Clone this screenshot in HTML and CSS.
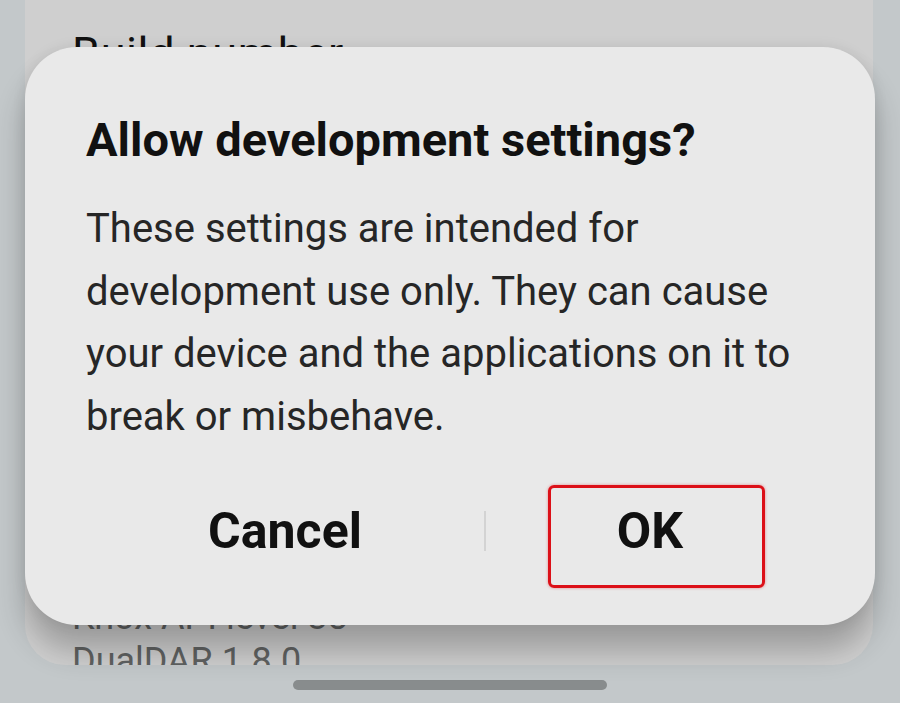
FILE: index.html
```html
<!DOCTYPE html>
<html lang="en">
<head>
<meta charset="UTF-8" />
<meta name="viewport" content="width=device-width, initial-scale=1" />
<title>Allow development settings?</title>
<link rel="stylesheet" href="styles.css">
</head>
<body>
  <div class="screen">
    <div class="card">
      <div class="row first">Build number</div>
      <div class="row-spacer"></div>
      <div class="row dim">Knox API level 38</div>
      <div class="row dim">DualDAR 1.8.0</div>
    </div>
    <div class="home-bar"></div>

    <div class="dialog">
      <h1 class="title">Allow development settings?</h1>
      <p class="message">These settings are intended for development use only. They can cause your device and the applications on it to break or misbehave.</p>
      <div class="actions">
        <button class="action cancel">Cancel</button>
        <span class="divider"></span>
        <button class="action ok">OK</button>
      </div>
    </div>
  </div>
</body>
</html>
```

FILE: styles.css
```css
html, body {
  margin: 0;
  height: 100%;
}
body {
  background: #c3c8ca;
  font-family: Roboto, "Noto Sans", sans-serif;
  overflow: hidden;
}
.screen {
  position: relative;
  height: 703px;
  padding: 0 27px 0 25px;
}
.card {
  height: 665px;
  background: #cfcfcf;
  border-radius: 0 0 40px 40px;
  padding-left: 47px;
  box-sizing: border-box;
  display: flex;
  flex-direction: column;
  overflow: hidden;
}
.row {
  font-size: 36px;
  line-height: 1;
  color: #111;
  white-space: nowrap;
}
.row.first {
  font-size: 45px;
  letter-spacing: 0.6px;
  margin-top: 31px;
}
.row-spacer {
  flex: 1;
}
.row.dim {
  color: #606262;
  margin-bottom: 8px;
}
.row.dim:last-child {
  margin-bottom: -14px;
}
.home-bar {
  width: 314px;
  height: 10px;
  margin: 15px auto 0;
  background: #888c8d;
  border-radius: 5px;
  position: relative;
  left: 1px;
}

/* dialog lies over the settings card */
.dialog {
  position: absolute;
  left: 25px;
  top: 47px;
  width: 850px;
  height: 578px;
  box-sizing: border-box;
  padding: 0 61px;
  background: #e9e9e9;
  border-radius: 52px;
  box-shadow: 0 0 14px rgba(0,0,0,0.08), 0 26px 30px rgba(0,0,0,0.24);
}
.title {
  margin: 0;
  padding-top: 67px;
  font-size: 47px;
  font-weight: 700;
  line-height: 52px;
  color: #111;
}
.message {
  margin: 32px 0 0;
  font-size: 40px;
  line-height: 62.5px;
  color: #262626;
}
.actions {
  position: relative;
  display: flex;
  align-items: center;
  margin-top: 33px;
  height: 100px;
}
.action {
  background: none;
  border: none;
  padding: 0;
  font-family: inherit;
  font-size: 50px;
  font-weight: 700;
  color: #111;
  height: 100px;
}
.cancel {
  width: 398px;
}
.divider {
  width: 2px;
  height: 40px;
  background: #d3d3d3;
}
.ok {
  flex: 1;
  position: relative;
}
.ok::after {
  content: "";
  position: absolute;
  left: 62px;
  right: 49px;
  top: 4px;
  bottom: -7px;
  border: 3px solid #dc1018;
  border-radius: 6px;
  box-shadow: 0 0 3px rgba(220,16,24,0.45);
}
```
